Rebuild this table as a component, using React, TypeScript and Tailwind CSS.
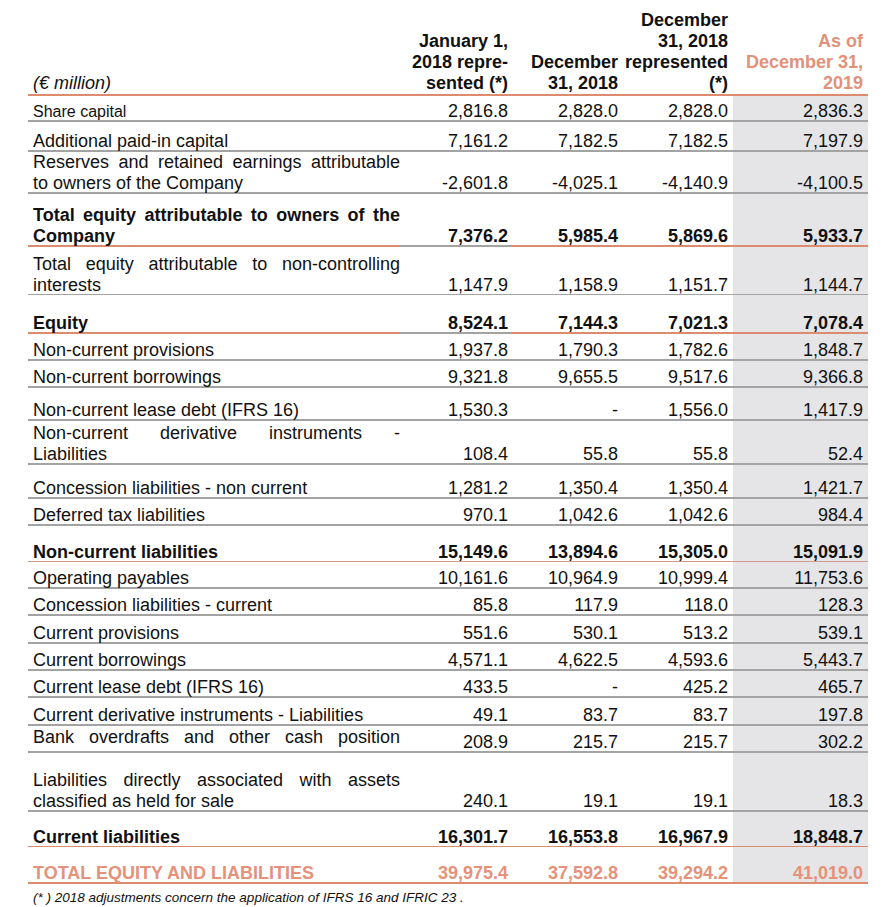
type Line = 'gray' | 'thin' | 'mix' | 'brown' | 'orangeThin' | 'orange';

type Row = {
  label: string[];
  values: string[];
  h: string;
  line: Line;
  bold?: boolean;
  total?: boolean;
  small?: boolean;
  clip?: boolean;
};

const GRID = 'grid grid-cols-[372px_112px_110px_111px_135px]';

const rows: Row[] = [
  { label: ['Share capital'], values: ['2,816.8', '2,828.0', '2,828.0', '2,836.3'], h: 'h-[26px]', line: 'gray', small: true },
  { label: ['Additional paid-in capital'], values: ['7,161.2', '7,182.5', '7,182.5', '7,197.9'], h: 'h-[30px]', line: 'gray' },
  {
    label: ['Reserves and retained earnings attributable', 'to owners of the Company'],
    values: ['-2,601.8', '-4,025.1', '-4,140.9', '-4,100.5'],
    h: 'h-[42px]',
    line: 'gray',
  },
  {
    label: ['Total equity attributable to owners of the', 'Company'],
    values: ['7,376.2', '5,985.4', '5,869.6', '5,933.7'],
    h: 'h-[53px]',
    line: 'mix',
    bold: true,
  },
  {
    label: ['Total equity attributable to non-controlling', 'interests'],
    values: ['1,147.9', '1,158.9', '1,151.7', '1,144.7'],
    h: 'h-[48px]',
    line: 'thin',
  },
  { label: ['Equity'], values: ['8,524.1', '7,144.3', '7,021.3', '7,078.4'], h: 'h-[39px]', line: 'mix', bold: true },
  { label: ['Non-current provisions'], values: ['1,937.8', '1,790.3', '1,782.6', '1,848.7'], h: 'h-[27px]', line: 'gray' },
  { label: ['Non-current borrowings'], values: ['9,321.8', '9,655.5', '9,517.6', '9,366.8'], h: 'h-[27px]', line: 'gray' },
  { label: ['Non-current lease debt (IFRS 16)'], values: ['1,530.3', '-', '1,556.0', '1,417.9'], h: 'h-[33px]', line: 'gray' },
  {
    label: ['Non-current derivative instruments -', 'Liabilities'],
    values: ['108.4', '55.8', '55.8', '52.4'],
    h: 'h-[44px]',
    line: 'gray',
  },
  { label: ['Concession liabilities - non current'], values: ['1,281.2', '1,350.4', '1,350.4', '1,421.7'], h: 'h-[34px]', line: 'gray' },
  { label: ['Deferred tax liabilities'], values: ['970.1', '1,042.6', '1,042.6', '984.4'], h: 'h-[27px]', line: 'gray' },
  {
    label: ['Non-current liabilities'],
    values: ['15,149.6', '13,894.6', '15,305.0', '15,091.9'],
    h: 'h-[36px]',
    line: 'brown',
    bold: true,
  },
  { label: ['Operating payables'], values: ['10,161.6', '10,964.9', '10,999.4', '11,753.6'], h: 'h-[27px]', line: 'gray' },
  { label: ['Concession liabilities - current'], values: ['85.8', '117.9', '118.0', '128.3'], h: 'h-[27px]', line: 'gray' },
  { label: ['Current provisions'], values: ['551.6', '530.1', '513.2', '539.1'], h: 'h-[28px]', line: 'gray' },
  { label: ['Current borrowings'], values: ['4,571.1', '4,622.5', '4,593.6', '5,443.7'], h: 'h-[27px]', line: 'gray' },
  { label: ['Current lease debt (IFRS 16)'], values: ['433.5', '-', '425.2', '465.7'], h: 'h-[27px]', line: 'gray' },
  {
    label: ['Current derivative instruments - Liabilities'],
    values: ['49.1', '83.7', '83.7', '197.8'],
    h: 'h-[28px]',
    line: 'gray',
  },
  {
    label: ['Bank overdrafts and other cash position', 'items'],
    values: ['208.9', '215.7', '215.7', '302.2'],
    h: 'h-[27px]',
    line: 'gray',
    clip: true,
  },
  {
    label: ['Liabilities directly associated with assets', 'classified as held for sale'],
    values: ['240.1', '19.1', '19.1', '18.3'],
    h: 'h-[59px]',
    line: 'gray',
  },
  {
    label: ['Current liabilities'],
    values: ['16,301.7', '16,553.8', '16,967.9', '18,848.7'],
    h: 'h-[35px]',
    line: 'orangeThin',
    bold: true,
  },
  {
    label: ['TOTAL EQUITY AND LIABILITIES'],
    values: ['39,975.4', '37,592.8', '39,294.2', '41,019.0'],
    h: 'h-[37px]',
    line: 'orange',
    bold: true,
    total: true,
  },
];

const GRAY = 'border-b-2 border-[#a3a3a3]';
const ORANGE = 'border-b-2 border-[#dc8b6f]';

function borderFor(line: Line, col: number) {
  switch (line) {
    case 'gray':
      return GRAY;
    case 'thin':
      return 'border-b border-[#a3a3a3]';
    case 'mix':
      return col === 1 ? GRAY : ORANGE;
    case 'brown':
      return 'border-b border-[#cf9c8b]';
    case 'orangeThin':
      return 'border-b border-[#dc8b6f]';
    case 'orange':
      return ORANGE;
  }
}

function Label({ row }: { row: Row }) {
  const last = row.label.length - 1;
  return (
    <div
      className={`flex flex-col pl-[5px] ${row.clip ? 'justify-start overflow-hidden' : 'justify-end'} ${
        row.small ? 'text-[16px]' : ''
      } ${borderFor(row.line, 0)}`}
    >
      <div className={row.clip ? 'mt-[1px]' : '-mb-[2px]'}>
        {row.label.map((t, i) => (
          <div
            key={i}
            className={`leading-[21px] ${i < last ? 'text-justify [text-align-last:justify]' : 'whitespace-nowrap'}`}
          >
            {t}
          </div>
        ))}
      </div>
    </div>
  );
}

function DataRow({ row }: { row: Row }) {
  return (
    <div
      className={`${GRID} ${row.h} ${row.bold ? 'font-bold' : ''} ${row.total ? 'text-[#e6917a]' : 'text-[#111]'}`}
    >
      <Label row={row} />
      {row.values.map((v, i) => (
        <div
          key={i}
          className={`flex items-end justify-end leading-[21px] ${i < 2 ? 'pr-[4px]' : 'pr-[5px]'} ${
            i === 3 ? 'bg-[#e5e5e7]' : ''
          } ${borderFor(row.line, i + 1)}`}
        >
          <span className="-mb-[2px]">{v}</span>
        </div>
      ))}
    </div>
  );
}

export default function App() {
  return (
    <div className="w-[895px] h-[907px] bg-white font-['Liberation_Sans',Arial,sans-serif] text-[18px] text-[#111]">
      <div className="ml-[28px] w-[840px]">
        <div className={`${GRID} h-[96px] font-bold leading-[21px]`}>
          <div className={`flex items-end pl-[5px] font-normal italic ${ORANGE}`}>(€ million)</div>
          <div className={`flex flex-col justify-end items-end text-right pr-[4px] ${ORANGE}`}>
            <span>January 1,</span>
            <span>2018 repre-</span>
            <span>sented (*)</span>
          </div>
          <div className={`flex flex-col justify-end items-end text-right pr-[4px] ${ORANGE}`}>
            <span>December</span>
            <span>31, 2018</span>
          </div>
          <div className={`flex flex-col justify-end items-end text-right pr-[5px] ${ORANGE}`}>
            <span>December</span>
            <span>31, 2018</span>
            <span>represented</span>
            <span>(*)</span>
          </div>
          <div className={`flex flex-col justify-end items-end text-right pr-[5px] text-[#e2917b] ${ORANGE}`}>
            <span>As of</span>
            <span>December 31,</span>
            <span>2019</span>
          </div>
        </div>
        {rows.map((r) => (
          <DataRow key={r.label[0]} row={r} />
        ))}
        <p className="mt-[6px] pl-[5px] text-[13.5px] leading-[16px] italic text-[#111]">
          (* ) 2018 adjustments concern the application of IFRS 16 and IFRIC 23 .
        </p>
      </div>
    </div>
  );
}
